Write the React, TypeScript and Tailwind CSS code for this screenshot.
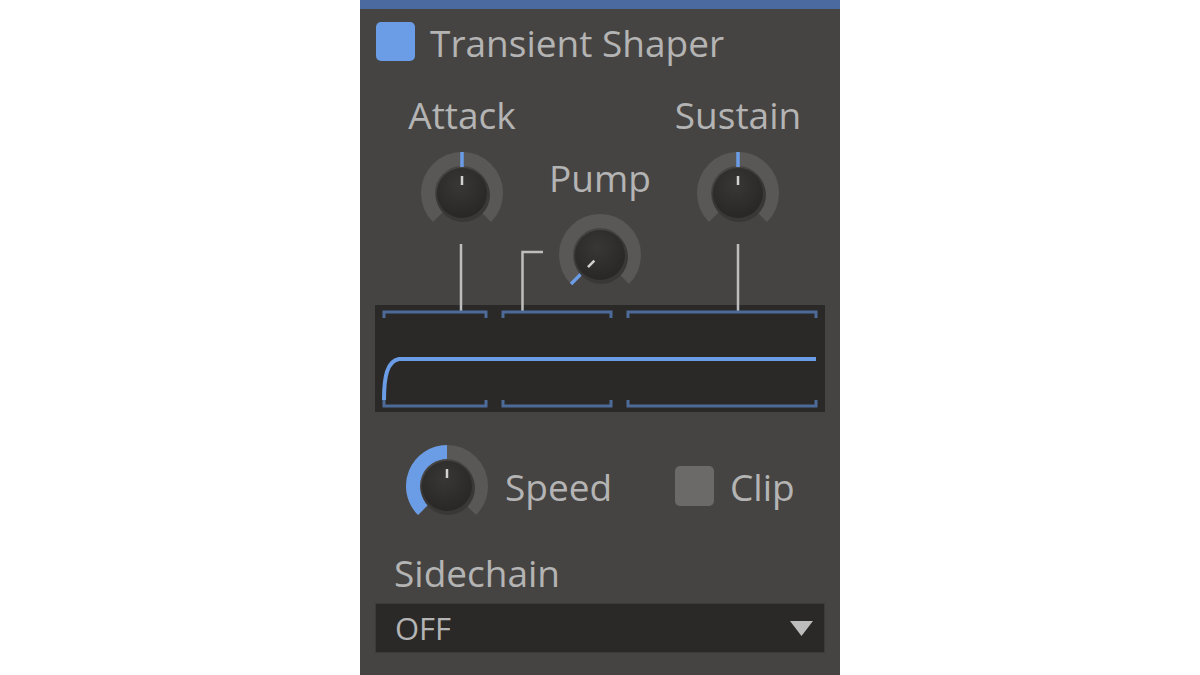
import React from 'react';

const BLUE = '#6b9de6';
const RING = '#5a5857';

const pt = (cx: number, cy: number, r: number, deg: number) => {
  const a = (deg * Math.PI) / 180;
  return [cx + r * Math.sin(a), cy - r * Math.cos(a)];
};

const arc = (r: number, from: number, to: number) => {
  const [x1, y1] = pt(42, 42, r, from);
  const [x2, y2] = pt(42, 42, r, to);
  const large = to - from > 180 ? 1 : 0;
  return `M ${x1} ${y1} A ${r} ${r} 0 ${large} 1 ${x2} ${y2}`;
};

type KnobProps = { value: number; fill?: boolean };

// value in degrees, -135 .. 135
const Knob: React.FC<KnobProps> = ({ value, fill }) => {
  const [tx1, ty1] = pt(42, 42, 26, value);
  const [tx2, ty2] = pt(42, 42, 41, value);
  const [px1, py1] = pt(42, 42, 8, value);
  const [px2, py2] = pt(42, 42, 17, value);
  return (
    <svg width="84" height="84" viewBox="0 0 84 84" className="block">
      <defs>
        <radialGradient id="knobGrad" cx="45%" cy="35%" r="70%">
          <stop offset="0%" stopColor="#383736" />
          <stop offset="100%" stopColor="#272625" />
        </radialGradient>
      </defs>
      <path d={arc(34, -135, 135)} stroke={RING} strokeWidth="14" fill="none" />
      {fill ? (
        <path d={arc(34, -135, value)} stroke={BLUE} strokeWidth="14" fill="none" />
      ) : (
        <line x1={tx1} y1={ty1} x2={tx2} y2={ty2} stroke={BLUE} strokeWidth="3.5" />
      )}
      <circle cx="43" cy="44" r="27" fill="#3a3837" />
      <circle cx="42" cy="42" r="25" fill="url(#knobGrad)" />
      <line x1={px1} y1={py1} x2={px2} y2={py2} stroke="#d2d2d2" strokeWidth="2.5" />
    </svg>
  );
};

const Bracket: React.FC<{ x1: number; x2: number; top: boolean }> = ({ x1, x2, top }) => {
  const d = top
    ? `M ${x1} 13 V 7 H ${x2} V 13`
    : `M ${x1} 95 V 101 H ${x2} V 95`;
  return <path d={d} stroke="#4d6b99" strokeWidth="3" fill="none" />;
};

export default function App() {
  return (
    <div className="min-h-screen bg-white flex justify-center">
      <div
        className="w-[480px] h-[675px] bg-[#464442] flex flex-col text-[#b4b4b4] overflow-hidden"
        style={{ fontFamily: '"Open Sans", sans-serif' }}
      >
        <div className="h-[9px] bg-[#4b6a9f]" />

        <div className="flex items-start mt-[13px] ml-[16px]">
          <div className="w-[39px] h-[39px] rounded-[5px] bg-[#6b9de6]" />
          <div className="ml-[15px] mt-[2px] text-[37px] leading-none">Transient Shaper</div>
        </div>

        <div className="flex justify-center gap-[18px] h-[148px] mt-[35px]">
          <div className="w-[120px] flex flex-col items-center">
            <div className="text-[37px] leading-none">Attack</div>
            <div className="mt-[18px]">
              <Knob value={0} />
            </div>
          </div>
          <div className="w-[120px] flex flex-col items-center mt-[63px]">
            <div className="text-[37px] leading-none">Pump</div>
            <div className="mt-[17px]">
              <Knob value={-135} />
            </div>
          </div>
          <div className="w-[120px] flex flex-col items-center">
            <div className="text-[37px] leading-none">Sustain</div>
            <div className="mt-[18px]">
              <Knob value={0} />
            </div>
          </div>
        </div>

        <svg width="480" height="61" viewBox="0 0 480 61" className="block">
          <g stroke="#bdbdbd" strokeWidth="2.5" fill="none">
            <path d="M 101 0 V 61" />
            <path d="M 378 0 V 61" />
            <path d="M 162.5 61 V 8 H 183" />
          </g>
        </svg>

        <div className="mx-[15px] h-[107px] bg-[#2a2928]">
          <svg width="449" height="107" viewBox="0 0 449 107" className="block">
            <g stroke="#bdbdbd" strokeWidth="2.5">
              <path d="M 86 0 V 7" />
              <path d="M 147.5 0 V 7" />
              <path d="M 363 0 V 7" />
            </g>
            <Bracket x1={9} x2={111} top />
            <Bracket x1={128} x2={236} top />
            <Bracket x1={253} x2={441} top />
            <Bracket x1={9} x2={111} top={false} />
            <Bracket x1={128} x2={236} top={false} />
            <Bracket x1={253} x2={441} top={false} />
            <path d="M 9 95 C 9 72, 12 56, 24 54 L 441 54" stroke={BLUE} strokeWidth="4" fill="none" />
          </svg>
        </div>

        <div className="flex items-center mt-[32px] pl-[45px]">
          <Knob value={0} fill />
          <div className="ml-[16px] w-[170px] text-[37px] leading-none">Speed</div>
          <div className="w-[39px] h-[40px] rounded-[5px] bg-[#6b6a69]" />
          <div className="ml-[16px] text-[37px] leading-none">Clip</div>
        </div>

        <div className="mt-[26px] pl-[34px] text-[37px] leading-none">Sidechain</div>

        <div className="mt-[12px] mx-[15px] h-[50px] bg-[#2a2928] border border-[#3c3a39] flex items-center justify-between pl-[19px] pr-[11px]">
          <span className="text-[31px] leading-none">OFF</span>
          <svg width="23" height="15" viewBox="0 0 23 15" className="block">
            <path d="M 0 0 H 23 L 11.5 15 Z" fill="#bdbdbd" />
          </svg>
        </div>
      </div>
    </div>
  );
}
